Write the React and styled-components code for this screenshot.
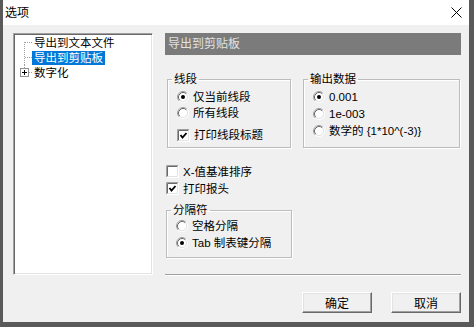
import React from "react";
import styled, { createGlobalStyle } from "styled-components";

const GlobalStyle = createGlobalStyle`
  html, body {
    margin: 0;
    padding: 0;
    background: #f0f0f0;
  }
  body {
    font-family: "Liberation Sans", "Noto Sans CJK SC", sans-serif;
    font-size: 11.5px;
    color: #000;
  }
  * {
    box-sizing: border-box;
  }
`;

//Window frame
const Window = styled.div`
  width: 474px;
  height: 327px;
  display: flex;
  flex-direction: column;
  background: #f0f0f0;
  border-left: 3px solid #5a5a5a;
  border-right: 5px solid #5a5a5a;
  border-bottom: 5px solid #5a5a5a;
`;

const TitleBar = styled.div`
  height: 25px;
  flex-shrink: 0;
  background: #fff;
  display: flex;
  align-items: center;
  justify-content: space-between;
  padding: 0 7px 0 2px;
  line-height: 14px;
  font-size: 12px;
`;

const Body = styled.div`
  flex: 1;
  display: grid;
  grid-template-columns: 140px 1fr;
  grid-template-rows: 243px auto;
  column-gap: 12px;
  padding: 8px 8px 0 10px;
`;

//Tree
const TreeBox = styled.div`
  height: 242px;
  background: #fff;
  border: 1px solid;
  border-color: #a0a0a0 #fff #fff #a0a0a0;
  box-shadow: inset 1px 1px #696969, inset -1px -1px #e3e3e3;
  padding-top: 1px;
`;

const TreeRow = styled.div`
  display: flex;
  align-items: center;
  height: 15px;
`;

const TreeLabel = styled.span`
  height: 14px;
  line-height: 14px;
  padding: 0 2px;
  white-space: nowrap;
  background: ${(p) => (p.$selected ? "#0078d7" : "transparent")};
  color: ${(p) => (p.$selected ? "#fff" : "#000")};
`;

const Connector = ({ first, last, plus }) => (
  <svg width="18" height="15" style={{ flexShrink: 0 }}>
    <g stroke="#a0a0a0" strokeDasharray="1 1">
      <line x1="10.5" x2="10.5" y1={first ? 7 : 0} y2={plus ? 3 : last ? 8 : 15} />
      <line x1={plus ? 15 : 11} x2="18" y1="7.5" y2="7.5" />
    </g>
    {plus && (
      <g>
        <rect x="6.5" y="3.5" width="8" height="8" fill="#fff" stroke="#919191" />
        <line x1="8" x2="13" y1="7.5" y2="7.5" stroke="#000" />
        <line x1="10.5" x2="10.5" y1="5" y2="10" stroke="#000" />
      </g>
    )}
  </svg>
);

//Right side
const Panel = styled.div`
  display: flex;
  flex-direction: column;
`;

const Header = styled.div`
  height: 22px;
  background: #7b7b7b;
  color: #e2e2e2;
  line-height: 22px;
  padding-left: 3px;
  font-size: 12px;
`;

const GroupRow = styled.div`
  display: flex;
  gap: 12px;
  margin-top: 17px;
  padding-left: 2px;
`;

const Group = styled.fieldset`
  margin: ${(p) => p.$top || 0}px 0 0 ${(p) => p.$offset || 0}px;
  padding: 0;
  width: ${(p) => p.$w}px;
  height: ${(p) => p.$h}px;
  border: 1px solid #bcbcbc;
  box-shadow: 1px 1px #fff, inset 1px 1px #fff;
  flex-shrink: 0;
`;

const Legend = styled.legend`
  margin-left: 4px;
  padding: 0 2px;
  line-height: 14px;
`;

const Options = styled.div`
  display: flex;
  flex-direction: column;
  padding: ${(p) => p.$top || 0}px 0 0 ${(p) => p.$left ?? 9}px;
`;

const OptionRow = styled.label`
  display: flex;
  align-items: center;
  gap: 4px;
  height: ${(p) => p.$h || 17}px;
  margin-top: ${(p) => p.$gap || 0}px;
  white-space: nowrap;
  line-height: 14px;
`;

const Separator = styled.div`
  margin-top: auto;
  height: 2px;
  border-top: 1px solid #a0a0a0;
  border-bottom: 1px solid #fff;
`;

const ButtonRow = styled.div`
  grid-column: 2;
  display: flex;
  justify-content: flex-end;
  gap: 19px;
  padding-top: 16px;
`;

const Button = styled.button`
  width: 70px;
  height: 21px;
  padding: 0;
  background: #f0f0f0;
  border: 1px solid;
  border-color: #fff #696969 #696969 #fff;
  box-shadow: inset -1px -1px #a0a0a0, inset 1px 1px #e3e3e3;
  font-family: inherit;
  font-size: 12px;
  color: #000;
`;

//Classic controls
const Radio = ({ checked }) => (
  <svg width="12" height="12" style={{ flexShrink: 0 }}>
    <circle cx="6" cy="6" r="4" fill="#fff" />
    <path d="M2.11 9.89 A5.5 5.5 0 0 1 9.89 2.11" fill="none" stroke="#a0a0a0" />
    <path d="M9.89 2.11 A5.5 5.5 0 0 1 2.11 9.89" fill="none" stroke="#fff" />
    <path d="M2.82 9.18 A4.5 4.5 0 0 1 9.18 2.82" fill="none" stroke="#696969" />
    <path d="M9.18 2.82 A4.5 4.5 0 0 1 2.82 9.18" fill="none" stroke="#e3e3e3" />
    {checked && <circle cx="6" cy="6" r="2" fill="#000" />}
  </svg>
);

const Check = ({ checked }) => (
  <svg width="13" height="13" style={{ flexShrink: 0 }}>
    <rect x="0" y="0" width="13" height="13" fill="#fff" />
    <path d="M0.5 12.5 V0.5 H12.5" fill="none" stroke="#a0a0a0" />
    <path d="M0.5 12.5 H12.5 V0.5" fill="none" stroke="#fff" />
    <path d="M1.5 11.5 V1.5 H11.5" fill="none" stroke="#696969" />
    <path d="M1.5 11.5 H11.5 V1.5" fill="none" stroke="#e3e3e3" />
    {checked && (
      <polyline points="3.5,6 5.5,8.5 9.5,4" fill="none" stroke="#000" strokeWidth="1.8" />
    )}
  </svg>
);

const CloseIcon = () => (
  <svg width="11" height="11">
    <path d="M0.5 0.5 L10.5 10.5 M10.5 0.5 L0.5 10.5" stroke="#000" strokeWidth="1" />
  </svg>
);

const tree = [
  { label: "导出到文本文件", first: true },
  { label: "导出到剪贴板", selected: true },
  { label: "数字化", last: true, plus: true },
];

const App = () => {
  return (
    <>
      <GlobalStyle />
      <Window>
        <TitleBar>
          <span>选项</span>
          <CloseIcon />
        </TitleBar>
        <Body>
          <TreeBox>
            {tree.map((item) => (
              <TreeRow key={item.label}>
                <Connector first={item.first} last={item.last} plus={item.plus} />
                <TreeLabel $selected={item.selected}>{item.label}</TreeLabel>
              </TreeRow>
            ))}
          </TreeBox>
          <Panel>
            <Header>导出到剪贴板</Header>
            <GroupRow>
              <Group $w={124} $h={76}>
                <Legend>线段</Legend>
                <Options $top={3}>
                  <OptionRow $h={16}>
                    <Radio checked />
                    仅当前线段
                  </OptionRow>
                  <OptionRow $h={16}>
                    <Radio />
                    所有线段
                  </OptionRow>
                  <OptionRow $h={16} $gap={6}>
                    <Check checked />
                    打印线段标题
                  </OptionRow>
                </Options>
              </Group>
              <Group $w={157} $h={76}>
                <Legend>输出数据</Legend>
                <Options $top={2}>
                  <OptionRow>
                    <Radio checked />
                    0.001
                  </OptionRow>
                  <OptionRow>
                    <Radio />
                    1e-003
                  </OptionRow>
                  <OptionRow>
                    <Radio />
                    数学的 {"{1*10^(-3)}"}
                  </OptionRow>
                </Options>
              </Group>
            </GroupRow>
            <Options $top={15} $left={1}>
              <OptionRow>
                <Check />
                X-值基准排序
              </OptionRow>
              <OptionRow>
                <Check checked />
                打印报头
              </OptionRow>
            </Options>
            <Group $w={126} $h={55} $offset={1} $top={6}>
              <Legend>分隔符</Legend>
              <Options>
                <OptionRow>
                  <Radio />
                  空格分隔
                </OptionRow>
                <OptionRow>
                  <Radio checked />
                  Tab 制表键分隔
                </OptionRow>
              </Options>
            </Group>
            <Separator />
          </Panel>
          <ButtonRow>
            <Button>确定</Button>
            <Button>取消</Button>
          </ButtonRow>
        </Body>
      </Window>
    </>
  );
};

export default App;
